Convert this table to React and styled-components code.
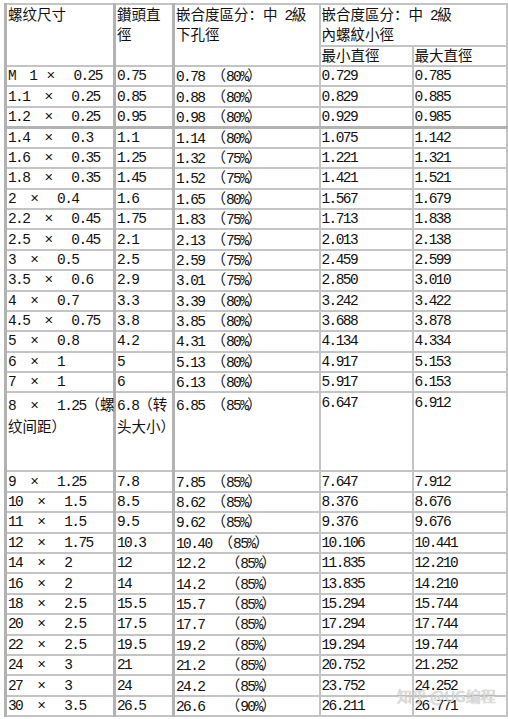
import React from 'react';
import styled, { createGlobalStyle } from 'styled-components';

const GlobalStyle = createGlobalStyle`
  html, body {
    margin: 0;
    padding: 0;
    background: #ffffff;
  }
`;

const Page = styled.div`
  position: relative;
  width: 508px;
  height: 719px;
  padding: 3px 0 0 4px;
  box-sizing: border-box;
  overflow: hidden;
`;

const Table = styled.table`
  width: 501px;
  table-layout: fixed;
  border-collapse: collapse;
  font-family: "Liberation Mono", "Noto Sans CJK SC", monospace;
  font-size: 14.5px;
  letter-spacing: -1.6px;
  color: #111;
`;

const LINE = '#c4c4c4';
const DARK = '#b2b2b2';

const Row = styled.tr`
  height: ${(p) => p.h || '20.4px'};
`;

const Cell = styled.td`
  padding: 0 0 0 1px;
  line-height: 16px;
  white-space: pre;
  overflow: visible;
  vertical-align: ${(p) => (p.top ? 'top' : 'middle')};
  border-top: 2px solid ${LINE};
  border-bottom: ${(p) => (p.thick ? `3px solid ${DARK}` : `2px solid ${LINE}`)};
  border-left: ${(p) => (p.strong ? `3px solid ${DARK}` : `2px solid ${LINE}`)};
  border-right: 2px solid ${LINE};
  ${(p) => p.top && 'padding-top: 1px; line-height: 19px;'}
`;

const HeadCell = styled(Cell)`
  vertical-align: top;
  padding-top: 0;
  line-height: 18px;
`;

const Cjk = styled.span`
  font-family: "Noto Sans CJK SC", sans-serif;
  letter-spacing: 0;
`;

const Mult = styled.span`
  display: inline-block;
  width: 15px;
  line-height: 14px;
  text-align: center;
  letter-spacing: 0;
  margin-left: ${(p) => (p.tight ? '7px' : '12px')};
  margin-right: 15px;
`;

const Watermark = styled.div`
  position: absolute;
  left: 397px;
  top: 685px;
  font-family: "Noto Sans CJK SC", sans-serif;
  font-size: 15px;
  letter-spacing: 0;
  color: rgba(240, 240, 240, 0.8);
  text-shadow: 0 0 1px rgba(130, 130, 130, 0.9);
  pointer-events: none;
`;

const CJK_RE = /([\u3000-\u9fff\uff00-\uffef]+)/;

const Rich = ({ text }) =>
  text.split(CJK_RE).map((part, i) =>
    CJK_RE.test(part) ? <Cjk key={i}>{part}</Cjk> : <React.Fragment key={i}>{part}</React.Fragment>
  );

const rows = [
  ['M  1', '0.25', '', '0.75', '0.78 （80%）', '0.729', '0.785', { tight: true }],
  ['1.1', '0.25', '', '0.85', '0.88 （80%）', '0.829', '0.885'],
  ['1.2', '0.25', '', '0.95', '0.98 （80%）', '0.929', '0.985', { thick: true }],
  ['1.4', '0.3', '', '1.1', '1.14 （80%）', '1.075', '1.142'],
  ['1.6', '0.35', '', '1.25', '1.32 （75%）', '1.221', '1.321'],
  ['1.8', '0.35', '', '1.45', '1.52 （75%）', '1.421', '1.521'],
  ['2', '0.4', '', '1.6', '1.65 （80%）', '1.567', '1.679'],
  ['2.2', '0.45', '', '1.75', '1.83 （75%）', '1.713', '1.838'],
  ['2.5', '0.45', '', '2.1', '2.13 （75%）', '2.013', '2.138'],
  ['3', '0.5', '', '2.5', '2.59 （75%）', '2.459', '2.599'],
  ['3.5', '0.6', '', '2.9', '3.01 （75%）', '2.850', '3.010'],
  ['4', '0.7', '', '3.3', '3.39 （80%）', '3.242', '3.422'],
  ['4.5', '0.75', '', '3.8', '3.85 （80%）', '3.688', '3.878'],
  ['5', '0.8', '', '4.2', '4.31 （80%）', '4.134', '4.334'],
  ['6', '1', '', '5', '5.13 （80%）', '4.917', '5.153'],
  ['7', '1', '', '6', '6.13 （80%）', '5.917', '6.153'],
  ['8', '1.25', '（螺\n纹间距）', '6.8（转\n头大小）', '6.85 （85%）', '6.647', '6.912', { tall: true }],
  ['9', '1.25', '', '7.8', '7.85 （85%）', '7.647', '7.912'],
  ['10', '1.5', '', '8.5', '8.62 （85%）', '8.376', '8.676'],
  ['11', '1.5', '', '9.5', '9.62 （85%）', '9.376', '9.676'],
  ['12', '1.75', '', '10.3', '10.40 （85%）', '10.106', '10.441'],
  ['14', '2', '', '12', '12.2   （85%）', '11.835', '12.210'],
  ['16', '2', '', '14', '14.2   （85%）', '13.835', '14.210'],
  ['18', '2.5', '', '15.5', '15.7   （85%）', '15.294', '15.744'],
  ['20', '2.5', '', '17.5', '17.7   （85%）', '17.294', '17.744'],
  ['22', '2.5', '', '19.5', '19.2   （85%）', '19.294', '19.744'],
  ['24', '3', '', '21', '21.2   （85%）', '20.752', '21.252'],
  ['27', '3', '', '24', '24.2   （85%）', '23.752', '24.252'],
  ['30', '3.5', '', '26.5', '26.6   （90%）', '26.211', '26.771'],
];

export default function App() {
  return (
    <Page>
      <GlobalStyle />
      <Table>
        <colgroup>
          <col style={{ width: 109 }} />
          <col style={{ width: 59 }} />
          <col style={{ width: 146 }} />
          <col style={{ width: 93 }} />
          <col style={{ width: 94 }} />
        </colgroup>
        <thead>
          <Row h="38px">
            <HeadCell rowSpan={2} strong>
              <Rich text="螺纹尺寸" />
            </HeadCell>
            <HeadCell rowSpan={2} strong>
              <Rich text={'鑚頭直\n徑'} />
            </HeadCell>
            <HeadCell rowSpan={2} strong>
              <Rich text={'嵌合度區分：中 2級\n下孔徑'} />
            </HeadCell>
            <HeadCell colSpan={2}>
              <Rich text={'嵌合度區分：中 2級\n內螺紋小徑'} />
            </HeadCell>
          </Row>
          <Row h="20px">
            <Cell>
              <Rich text="最小直徑" />
            </Cell>
            <Cell>
              <Rich text="最大直徑" />
            </Cell>
          </Row>
        </thead>
        <tbody>
          {rows.map(([a, b, tail, drill, hole, min, max, opt = {}]) => (
            <Row key={a + b} h={opt.tall ? '79px' : opt.thick ? '19px' : undefined}>
              <Cell strong thick={opt.thick} top={opt.tall}>
                {a}
                <Mult tight={opt.tight}>×</Mult>
                {b}
                <Rich text={tail} />
              </Cell>
              <Cell strong thick={opt.thick} top={opt.tall}>
                <Rich text={drill} />
              </Cell>
              <Cell strong thick={opt.thick} top={opt.tall}>
                <Rich text={hole} />
              </Cell>
              <Cell thick={opt.thick} top={opt.tall}>
                {min}
              </Cell>
              <Cell thick={opt.thick} top={opt.tall}>
                {max}
              </Cell>
            </Row>
          ))}
        </tbody>
      </Table>
      <Watermark>知乎 @UG编程</Watermark>
    </Page>
  );
}
